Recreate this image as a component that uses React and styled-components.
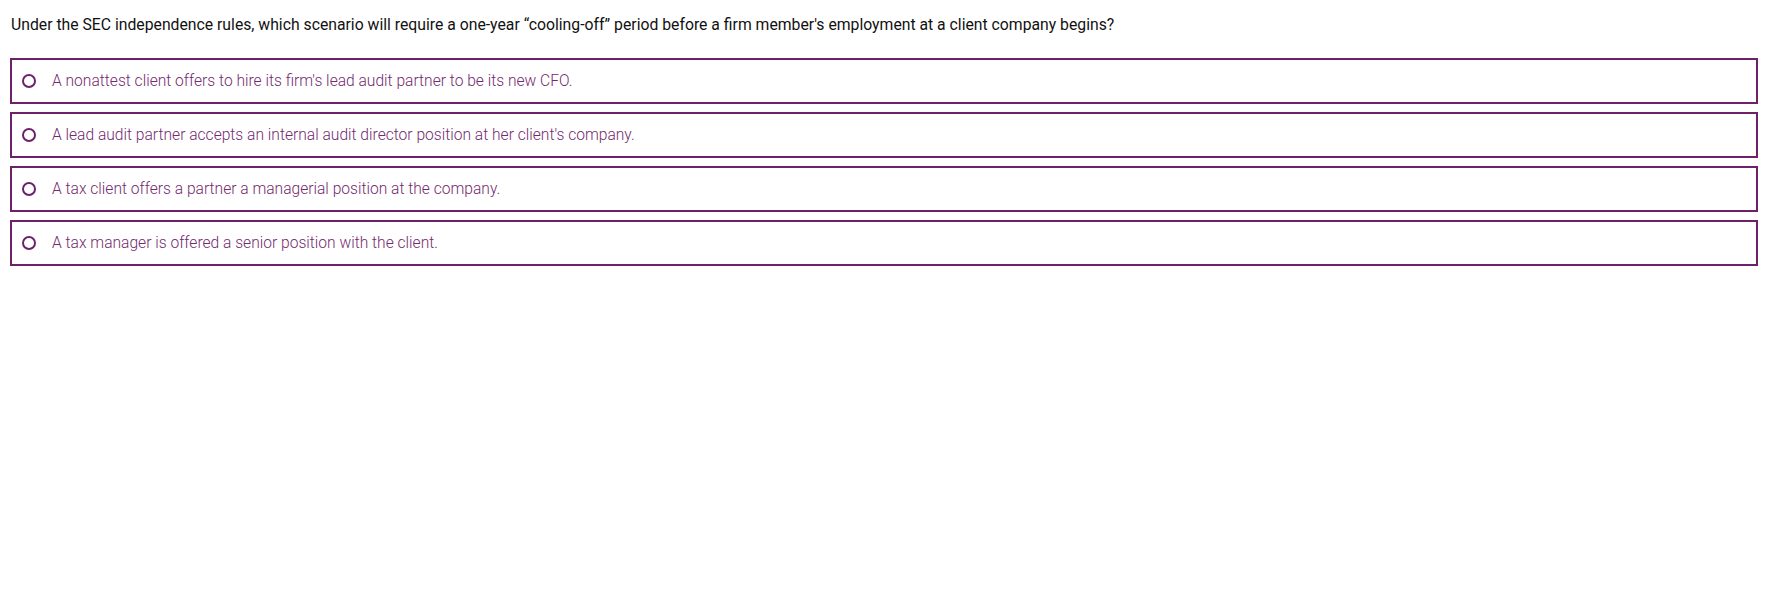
import styled, { createGlobalStyle } from "styled-components";

const GlobalStyle = createGlobalStyle`
  html, body {
    margin: 0;
    padding: 0;
    background: #ffffff;
  }
  body {
    font-family: Roboto, "Liberation Sans", Arial, sans-serif;
  }
`;

const Page = styled.div`
  padding: 15px 20px 0 10px;
`;

const Question = styled.p`
  margin: 0 0 23px 1px;
  font-size: 15.75px;
  line-height: 20px;
  color: #111111;
`;

const Options = styled.ul`
  list-style: none;
  margin: 0;
  padding: 0;
  display: flex;
  flex-direction: column;
  gap: 8px;
`;

const Option = styled.li`
  box-sizing: border-box;
  height: 46px;
  border: 2px solid #6e2168;
  display: flex;
  align-items: center;
  padding: 0 0 0 10px;
  cursor: pointer;
`;

const Radio = styled.span`
  box-sizing: border-box;
  width: 14px;
  height: 14px;
  border: 2.5px solid #6e2168;
  border-radius: 50%;
  flex: none;
  margin-right: 16px;
`;

const Label = styled.span`
  font-size: 15.6px;
  font-weight: 300;
  color: #732a6e;
  line-height: 20px;
`;

const answers = [
  "A nonattest client offers to hire its firm's lead audit partner to be its new CFO.",
  "A lead audit partner accepts an internal audit director position at her client's company.",
  "A tax client offers a partner a managerial position at the company.",
  "A tax manager is offered a senior position with the client.",
];

export default function App() {
  return (
    <>
      <GlobalStyle />
      <Page>
        <Question>
          Under the SEC independence rules, which scenario will require a one-year “cooling-off” period before a firm member's employment at a client company begins?
        </Question>
        <Options>
          {answers.map((a) => (
            <Option key={a}>
              <Radio />
              <Label>{a}</Label>
            </Option>
          ))}
        </Options>
      </Page>
    </>
  );
}
